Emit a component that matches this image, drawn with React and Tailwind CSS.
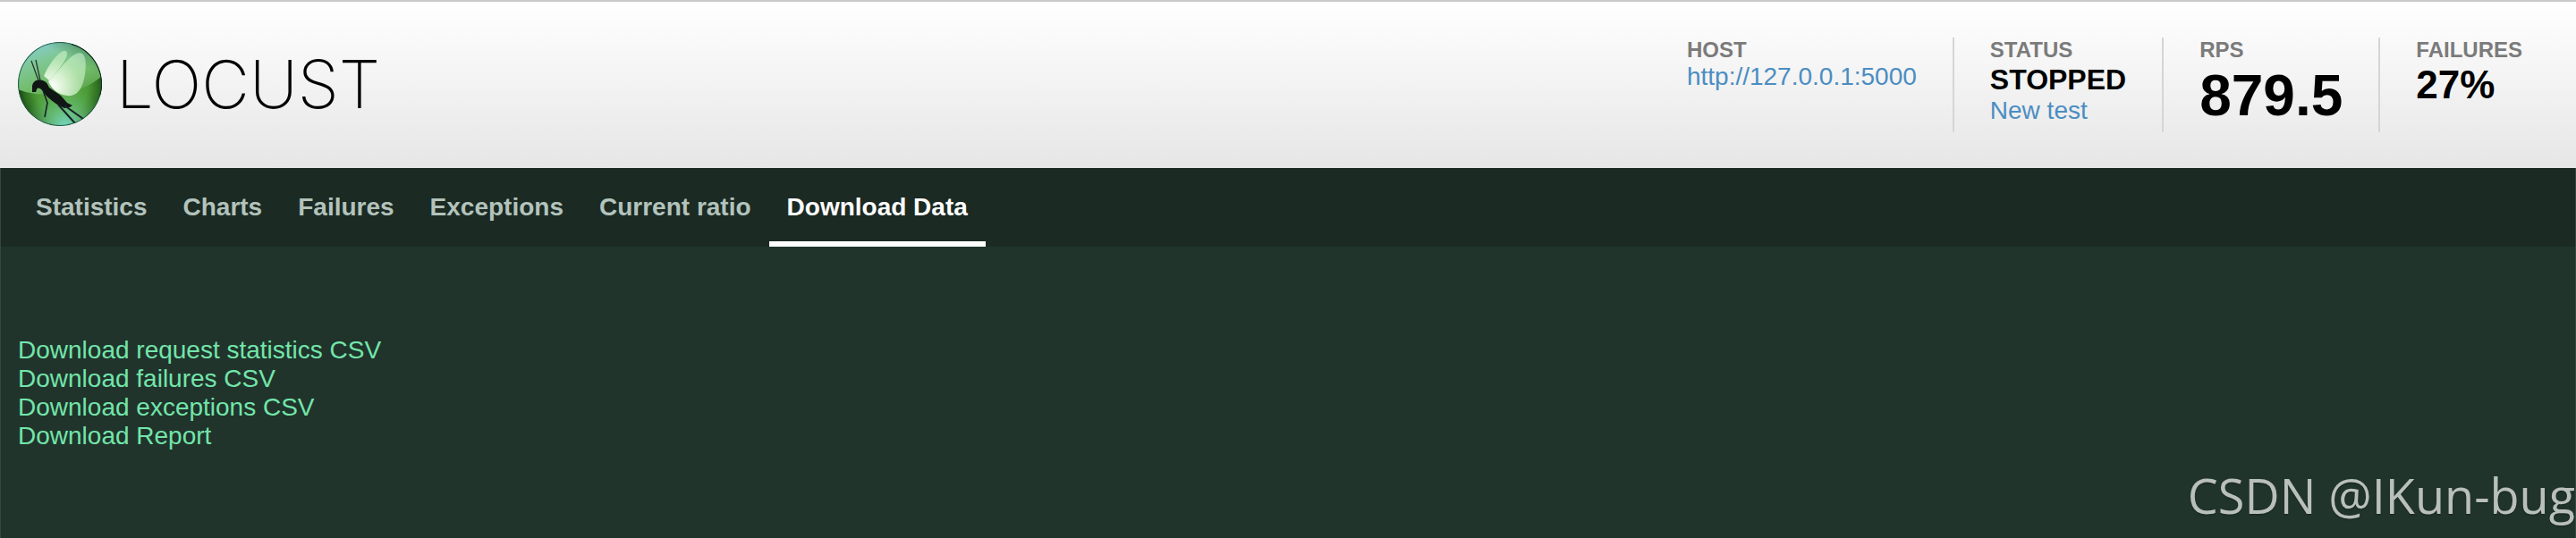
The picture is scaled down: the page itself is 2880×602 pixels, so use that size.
import React from "react";

const tabs = ["Statistics", "Charts", "Failures", "Exceptions", "Current ratio", "Download Data"];

const downloads = [
  { label: "Download request statistics CSV", href: "/stats/requests/csv" },
  { label: "Download failures CSV", href: "/stats/failures/csv" },
  { label: "Download exceptions CSV", href: "/exceptions/csv" },
  { label: "Download Report", href: "/stats/report" },
];

const LocustMark = () => (
  <svg viewBox="0 0 94 94" className="size-[94px] shrink-0" aria-hidden="true">
    <defs>
      <radialGradient id="shade" cx="52%" cy="56%" r="56%">
        <stop offset="0" stopColor="#65b04c" />
        <stop offset="0.55" stopColor="#4c9a35" />
        <stop offset="0.8" stopColor="#2c6a20" />
        <stop offset="1" stopColor="#0a1f08" />
      </radialGradient>
      <radialGradient id="glow" cx="56%" cy="100%" r="48%">
        <stop offset="0" stopColor="#78d8c4" />
        <stop offset="0.4" stopColor="#6cc488" stopOpacity="0.8" />
        <stop offset="1" stopColor="#5fb765" stopOpacity="0" />
      </radialGradient>
      <linearGradient id="gloss" x1="0.1" y1="0" x2="0.7" y2="1">
        <stop offset="0" stopColor="#86cfdc" />
        <stop offset="0.35" stopColor="#7fc795" />
        <stop offset="0.7" stopColor="#72bb68" />
        <stop offset="1" stopColor="#5ca34c" />
      </linearGradient>
      <linearGradient id="topDark" x1="0.6" y1="0.3" x2="0.85" y2="0">
        <stop offset="0" stopColor="#3f7f55" stopOpacity="0" />
        <stop offset="1" stopColor="#2f6b4a" stopOpacity="0.8" />
      </linearGradient>
      <radialGradient id="wing" gradientUnits="userSpaceOnUse" cx="38" cy="50" r="46">
        <stop offset="0" stopColor="#ffffff" />
        <stop offset="0.3" stopColor="#e6f8e0" stopOpacity="0.9" />
        <stop offset="0.7" stopColor="#c8efc2" stopOpacity="0.7" />
        <stop offset="1" stopColor="#c8efcf" stopOpacity="0.6" />
      </radialGradient>
      <clipPath id="disc">
        <circle cx="47" cy="47" r="47" />
      </clipPath>
    </defs>
    <g clipPath="url(#disc)">
      <circle cx="47" cy="47" r="47" fill="url(#shade)" />
      <circle cx="47" cy="47" r="47" fill="url(#glow)" />
      <path d="M0 53Q20 61 47 58Q76 54 94 38V0H0Z" fill="url(#gloss)" />
      <path d="M0 53Q20 61 47 58Q76 54 94 38V0H0Z" fill="url(#topDark)" />
      <path d="M29 38C32 30 39 20 44 15C49 10 54 8 55 12C56 18 46 31 35 43Z" fill="url(#wing)" />
      <path d="M34 44C42 36 50 25 57 19C63 13 69 11 72 13C77 17 76 29 75 36C74 43 72 50 68 55C63 61 56 61 50 59C43 57 37 51 34 44Z" fill="url(#wing)" />
      <path d="M15 21L23 43M20 20L25 43" stroke="#24372d" strokeWidth="1.3" fill="none" />
      <path d="M16 56L16 49Q17 43 23 42.5Q30 42 33 47L35 51L48 60L55 68L61 71L58 73L52 74L44 70Q32 62 28 55Q24 50 21.5 52L20 56Z" fill="#101614" />
      <path d="M28 54L33 68L30 84" stroke="#17202b" strokeWidth="1.6" fill="none" />
      <path d="M45 70L64 91M52 71L73 86" stroke="#17202b" strokeWidth="2" fill="none" />
      <circle cx="47" cy="47" r="46.5" stroke="#245f4c" strokeWidth="1.2" fill="none" />
      <path d="M60 2.5A46.5 46.5 0 0 1 92 60" stroke="#0c2114" strokeWidth="1.2" fill="none" />
    </g>
  </svg>
);

const Stat = ({ label, children }) => (
  <div className="border-l-2 border-[#d5d5d5] px-10 pb-1 first:border-l-0">
    <dt className="text-2xl leading-7 font-bold text-[#7b7b7b]">{label}</dt>
    {children}
  </div>
);

const App = () => {
  return (
    <div className="flex min-h-screen flex-col bg-[#20342c] font-['Liberation_Sans',Arial,sans-serif] text-[28px] leading-8">
      <header className="flex justify-between border-t-2 border-[#cacaca] bg-linear-to-b from-white to-[#e6e6e6] px-5 py-10">
        <a href="/" className="flex h-[104px] items-center gap-4 text-black">
          <LocustMark />
          <span className="font-['Inter',sans-serif] text-[74px] leading-none font-extralight">LOCUST</span>
        </a>
        <dl className="flex">
          <Stat label="HOST">
            <dd><a href="http://127.0.0.1:5000" className="text-[#4b8dc2]">http://127.0.0.1:5000</a></dd>
          </Stat>
          <Stat label="STATUS">
            <dd className="text-[32px] leading-[38px] font-bold">STOPPED</dd>
            <dd><a href="#new" className="text-[#4b8dc2]">New test</a></dd>
          </Stat>
          <Stat label="RPS">
            <dd className="text-[64px] leading-[74px] font-bold">879.5</dd>
          </Stat>
          <Stat label="FAILURES">
            <dd className="text-[44px] leading-[50px] font-bold">27%</dd>
          </Stat>
        </dl>
      </header>

      <nav className="flex border-x border-[#33483e] bg-[#1b2a23] px-[19px]">
        {tabs.map((tab) => (
          <button
            key={tab}
            type="button"
            className={`border-b-6 px-5 pt-7 pb-[22px] font-bold ${
              tab === "Download Data" ? "border-white text-white" : "border-transparent text-[#b3c3bc]"
            }`}
          >
            {tab}
          </button>
        ))}
      </nav>

      <main className="flex flex-1 flex-col justify-between border-x border-[#33483e]">
        <ul className="px-[19px] pt-[100px]">
          {downloads.map((item) => (
            <li key={item.href}>
              <a href={item.href} className="text-[#73e5aa]">{item.label}</a>
            </li>
          ))}
        </ul>
        <p className="self-end pb-4 font-['Open_Sans',sans-serif] text-[54px] leading-[64px] text-[#b9bfbc] text-shadow-sm">
          CSDN @IKun-bug
        </p>
      </main>
    </div>
  );
};

export default App;
